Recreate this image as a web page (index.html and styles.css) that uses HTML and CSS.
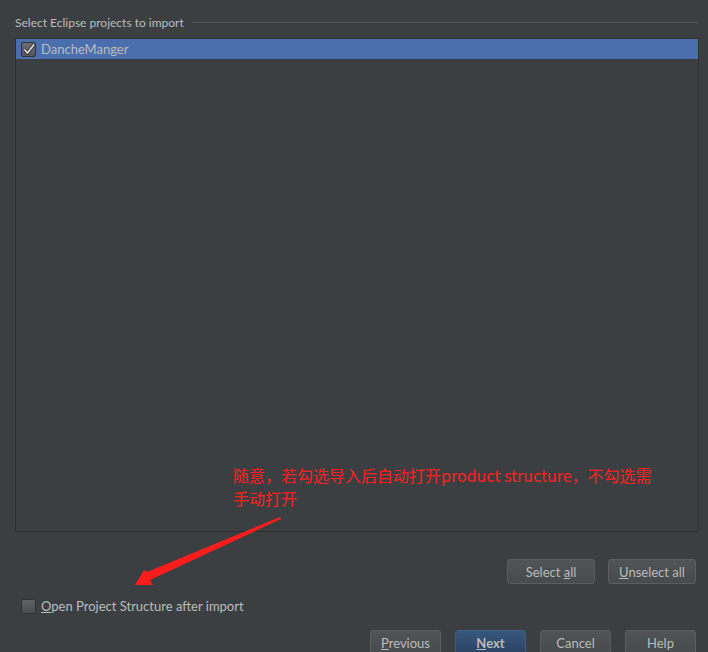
FILE: index.html
```html
<!DOCTYPE html>
<html lang="zh-CN">

<head>
    <meta charset="UTF-8" />
    <title>Import Project from Eclipse</title>
    <meta name="viewport" content="width=device-width, initial-scale=1.0" />
    <link rel="stylesheet" href="styles.css">
</head>

<body>

    <div class="dialog">

        <!-- title + separator -->
        <div class="title-row">
            <span class="title">Select Eclipse projects to import</span>
            <span class="title-line"></span>
        </div>

        <!-- project list -->
        <div class="list">
            <div class="row selected">
                <span class="check checked">
                    <svg width="12" height="12" viewBox="0 0 12 12">
                        <path d="M1.5 6.5 L4.5 10 L11 1.5" fill="none" stroke="#2b2b2b" stroke-width="3.2" />
                        <path d="M1.5 6.5 L4.5 10 L11 1.5" fill="none" stroke="#e4e4e4" stroke-width="1.6" />
                    </svg>
                </span>
                <span class="row-text">DancheManger</span>
            </div>
        </div>

        <div class="select-buttons">
            <button class="btn wide">Select <u>a</u>ll</button>
            <button class="btn wide"><u>U</u>nselect all</button>
        </div>

        <label class="option">
            <span class="check"></span>
            <span><u>O</u>pen Project Structure after import</span>
        </label>

        <div class="footer">
            <button class="btn"><u>P</u>revious</button>
            <button class="btn primary"><u>N</u>ext</button>
            <button class="btn">Cancel</button>
            <button class="btn">Help</button>
        </div>
    </div>

    <!-- annotation added on the screenshot -->
    <div class="note">
        <div>随意，若勾选导入后自动打开product structure，不勾选需</div>
        <div>手动打开</div>
    </div>
    <svg class="arrow" width="708" height="652" viewBox="0 0 708 652">
        <polygon points="280,517 147,572 144,570 135,585 153,585 150,580 281,519" fill="#ff1c1c" />
    </svg>

</body>

</html>
```

FILE: styles.css
```css
body {
    margin: 0;
    background: #3c3f41;
    color: #bbbbbb;
    font-family: 'Lato', 'Noto Sans CJK SC', sans-serif;
    font-size: 12px;
    width: 708px;
    height: 652px;
    overflow: hidden;
    position: relative;
}

.dialog {
    padding: 14px 9px 0 15px;
    display: flex;
    flex-direction: column;
}

.title-row {
    display: flex;
    align-items: center;
    height: 16px;
}

.title {
    white-space: nowrap;
}

.title-line {
    flex: 1;
    margin-left: 8px;
    border-top: 1px solid #535557;
    margin-top: 1px;
}

.list {
    margin-top: 8px;
    height: 492px;
    border: 1px solid #2e3032;
}

.row {
    height: 20px;
    display: flex;
    align-items: center;
    padding-left: 5px;
}

.row.selected {
    background: #4b6eaf;
}

.row-text {
    margin-left: 5px;
    font-size: 13px;
}

.check {
    width: 13px;
    height: 13px;
    border: 1px solid #2f3133;
    border-radius: 2px;
    background: linear-gradient(#606365, #4a4d4f);
    display: flex;
    align-items: center;
    justify-content: center;
    flex-shrink: 0;
}

.check.checked {
    background: linear-gradient(#6b6e70, #55585a);
}

.select-buttons {
    display: flex;
    justify-content: flex-end;
    gap: 13px;
    margin-top: 27px;
    padding-right: 3px;
}

.btn {
    width: 71px;
    height: 25px;
    padding: 0;
    border: 1px solid #5b5e60;
    border-radius: 3px;
    background: linear-gradient(#505456, #474b4d);
    color: #bbbbbb;
    font-family: inherit;
    font-size: 13px;
}

.btn.wide {
    width: 88px;
}

.btn.primary {
    background: linear-gradient(#37577e, #2c4363);
    border-color: #3f5f82;
    font-weight: bold;
}

.option {
    display: flex;
    align-items: center;
    gap: 5px;
    margin-top: 14px;
    padding-left: 6px;
    font-size: 13px;
}

.footer {
    display: flex;
    justify-content: flex-end;
    gap: 14px;
    margin-top: 16px;
    padding-right: 3px;
}

.note {
    position: absolute;
    left: 233px;
    top: 464px;
    color: #ff1f1f;
    font-family: 'Noto Sans CJK SC', sans-serif;
    font-size: 16px;
    line-height: 23px;
    white-space: nowrap;
}

.arrow {
    position: absolute;
    left: 0;
    top: 0;
    pointer-events: none;
}
```
